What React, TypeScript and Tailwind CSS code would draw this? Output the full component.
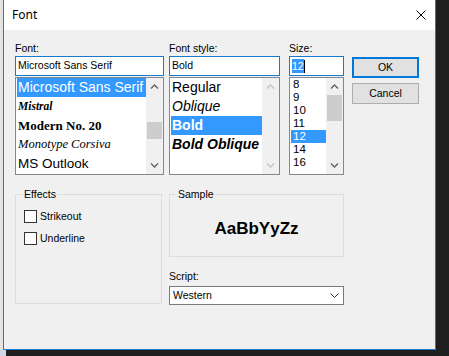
import type { ReactNode } from 'react';

type Item = { label: string; cls: string; selected?: boolean };

const fontItems: Item[] = [
  { label: 'Microsoft Sans Serif', cls: 'text-[14px]', selected: true },
  { label: 'Mistral', cls: "font-['Liberation_Serif',serif] italic font-bold text-[11.5px]" },
  { label: 'Modern No. 20', cls: "font-['Liberation_Serif',serif] font-bold text-[13px]" },
  { label: 'Monotype Corsiva', cls: "font-['Liberation_Serif',serif] italic text-[12.5px]" },
  { label: 'MS Outlook', cls: 'text-[13.5px]' },
];

const styleItems: Item[] = [
  { label: 'Regular', cls: 'text-[14px]' },
  { label: 'Oblique', cls: 'text-[14px] italic' },
  { label: 'Bold', cls: 'text-[14px] font-bold', selected: true },
  { label: 'Bold Oblique', cls: 'text-[14px] font-bold italic' },
];

const sizeItems = ['8', '9', '10', '11', '12', '14', '16'];

function Chevron({ up, color }: { up?: boolean; color: string }) {
  return (
    <svg width="9" height="5" viewBox="0 0 9 5">
      <path
        d={up ? 'M1 4.5L4.5 1L8 4.5' : 'M1 0.5L4.5 4L8 0.5'}
        fill="none"
        stroke={color}
        strokeWidth="1.3"
      />
    </svg>
  );
}

function ScrollBar({ thumbTop, thumbH, disabled }: { thumbTop?: number; thumbH?: number; disabled?: boolean }) {
  const c = disabled ? '#c2c2c2' : '#606060';
  return (
    <div className="flex w-[17px] shrink-0 flex-col bg-[#f0f0f0]">
      <div className="flex h-[17px] items-center justify-center">
        <Chevron up color={c} />
      </div>
      <div className="flex-1">
        {thumbH ? <div className="mx-[1px] bg-[#cdcdcd]" style={{ marginTop: thumbTop, height: thumbH }} /> : null}
      </div>
      <div className="flex h-[17px] items-center justify-center">
        <Chevron color={c} />
      </div>
    </div>
  );
}

function ListBox({ children, bar }: { children: ReactNode; bar: ReactNode }) {
  return (
    <div className="mt-[1px] flex h-[98px] border border-[#828790] bg-white">
      <div className="min-w-0 flex-1 overflow-hidden pl-[1px]">{children}</div>
      {bar}
    </div>
  );
}

function Row({ item }: { item: Item }) {
  return (
    <div
      className={`h-[19px] whitespace-nowrap pl-[1px] leading-[19px] ${item.cls} ${
        item.selected ? 'bg-[#3399ff] text-white' : ''
      }`}
    >
      {item.label}
    </div>
  );
}

function TextBox({ children }: { children: ReactNode }) {
  return (
    <div className="flex h-[20px] items-center border border-[#1979ca] bg-white pl-[2px] whitespace-nowrap">
      {children}
    </div>
  );
}

function Check({ label }: { label: string }) {
  return (
    <div className="flex items-center gap-[3px]">
      <div className="h-[13px] w-[13px] border border-[#333333] bg-white" />
      <span className="leading-[13px]">{label}</span>
    </div>
  );
}

export default function App() {
  return (
    <div className="flex h-[356px] w-[449px] flex-col bg-[#1f1f1f] font-['Liberation_Sans',Arial,sans-serif] text-black">
      <div className="flex h-[350px]">
        <div className="w-[3px] bg-[#e4e4e4]" />
        <div className="flex w-[433px] flex-col border-x border-b border-[#1a7fd4] bg-[#f0f0f0]">
          {/* title bar */}
          <div className="flex h-[30px] shrink-0 items-center justify-between bg-white pl-[8px] pr-[9px]">
            <span className="font-['Noto_Sans',sans-serif] text-[12px]">Font</span>
            <svg width="10" height="10" viewBox="0 0 10 10">
              <path d="M0.5 0.5L9.5 9.5M9.5 0.5L0.5 9.5" stroke="#000" strokeWidth="1" />
            </svg>
          </div>

          <div className="flex flex-col pl-[11px] pt-[11px] text-[10.5px]">
            <div className="flex items-start">
              <div className="flex w-[149px] flex-col">
                <div className="h-[15px] leading-[15px]">Font:</div>
                <TextBox>Microsoft Sans Serif</TextBox>
                <ListBox bar={<ScrollBar thumbTop={27} thumbH={17} />}>
                  {fontItems.map((it) => (
                    <Row key={it.label} item={it} />
                  ))}
                </ListBox>
              </div>

              <div className="ml-[5px] flex w-[111px] flex-col">
                <div className="h-[15px] leading-[15px]">Font style:</div>
                <TextBox>Bold</TextBox>
                <ListBox bar={<ScrollBar disabled />}>
                  {styleItems.map((it) => (
                    <Row key={it.label} item={it} />
                  ))}
                </ListBox>
              </div>

              <div className="ml-[9px] flex w-[55px] flex-col">
                <div className="h-[15px] leading-[15px]">Size:</div>
                <TextBox>
                  <span className="bg-[#3399ff] text-white leading-[14px]">12</span>
                  <span className="h-[13px] w-[1px] bg-black" />
                </TextBox>
                <ListBox bar={<ScrollBar thumbTop={0} thumbH={26} />}>
                  {sizeItems.map((s) => (
                    <div
                      key={s}
                      className={`h-[13px] pl-[2px] text-[11.5px] leading-[13px] ${
                        s === '12' ? 'bg-[#3399ff] text-white' : ''
                      }`}
                    >
                      {s}
                    </div>
                  ))}
                </ListBox>
              </div>

              <div className="ml-[8px] flex w-[67px] flex-col gap-[5px] pt-[16px]">
                <button className="h-[21px] border-2 border-[#0078d7] bg-[#e1e1e1] text-[10.5px]">OK</button>
                <button className="h-[21px] border border-[#adadad] bg-[#e1e1e1] text-[10.5px]">Cancel</button>
              </div>
            </div>

            <div className="mt-[13px] flex items-start">
              <fieldset className="h-[116px] w-[147px] border border-[#dcdcdc]">
                <legend className="ml-[7px] px-[1px] leading-[12px]">Effects</legend>
                <div className="flex flex-col gap-[9px] pl-[8px] pt-[10px]">
                  <Check label="Strikeout" />
                  <Check label="Underline" />
                </div>
              </fieldset>

              <div className="ml-[7px] flex w-[175px] flex-col">
                <fieldset className="h-[69px] border border-[#dcdcdc]">
                  <legend className="ml-[7px] px-[1px] leading-[12px]">Sample</legend>
                  <div className="flex h-[54px] items-center justify-center pt-[3px] text-[17px] font-bold">
                    AaBbYyZz
                  </div>
                </fieldset>
                <div className="mt-[12px] h-[15px] leading-[15px]">Script:</div>
                <div className="mt-[2px] flex h-[19px] items-center justify-between border border-[#7a7a7a] bg-white pl-[3px] pr-[4px]">
                  <span>Western</span>
                  <svg width="9" height="5" viewBox="0 0 9 5">
                    <path d="M0.5 0.5L4.5 4.5L8.5 0.5" fill="none" stroke="#333" strokeWidth="1" />
                  </svg>
                </div>
              </div>
            </div>
          </div>
        </div>
      </div>
      <div className="h-[6px] w-[6px] bg-[#cfd8e6]" />
    </div>
  );
}
